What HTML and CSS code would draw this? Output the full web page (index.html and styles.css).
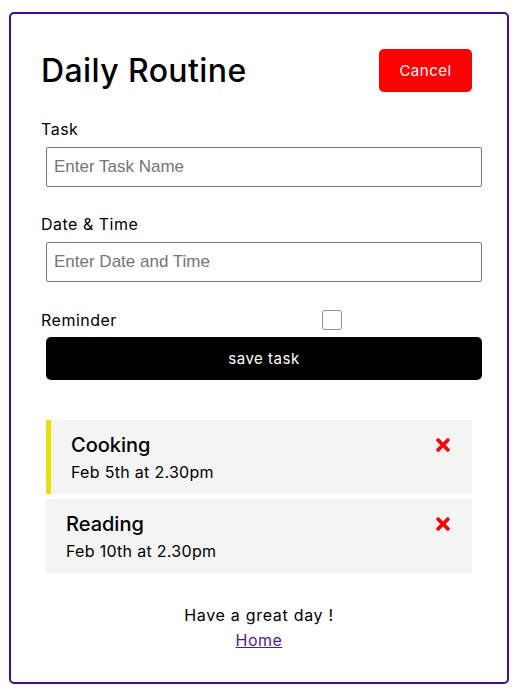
FILE: index.html
```html
<!DOCTYPE html>
<html lang="en">
<head>
<meta charset="utf-8">
<title>Daily Routine</title>
<link rel="stylesheet" href="styles.css">
</head>
<body>
<div class="container">
  <header class="header">
    <h1 class="title">Daily Routine</h1>
    <button class="btn btn-cancel" type="button">Cancel</button>
  </header>
  <form class="add-form">
    <div class="form-control">
      <label class="field-label">Task</label>
      <input class="text-input" type="text" placeholder="Enter Task Name">
    </div>
    <div class="form-control">
      <label class="field-label">Date &amp; Time</label>
      <input class="text-input" type="text" placeholder="Enter Date and Time">
    </div>
    <div class="form-control-check">
      <label class="check-label">Reminder</label>
      <div class="check-wrap"><input class="check-input" type="checkbox"></div>
    </div>
    <button class="btn btn-block" type="button">save task</button>
  </form>
  <div class="tasks">
    <div class="task reminder">
      <h3 class="task-title">Cooking
        <svg class="del-icon" viewBox="0 0 352 512" aria-hidden="true"><path d="M242.72 256l100.07-100.07c12.28-12.28 12.28-32.19 0-44.48l-22.24-22.24c-12.28-12.28-32.19-12.28-44.48 0L176 189.28 75.930 89.21c-12.28-12.28-32.19-12.28-44.48 0L9.21 111.45c-12.28 12.28-12.28 32.19 0 44.48L109.28 256 9.21 356.07c-12.28 12.28-12.28 32.19 0 44.48l22.24 22.24c12.28 12.28 32.2 12.28 44.48 0L176 322.72l100.07 100.07c12.28 12.28 32.2 12.28 44.48 0l22.24-22.240c12.28-12.28 12.28-32.19 0-44.48L242.72 256z"/></svg>
      </h3>
      <p class="task-day">Feb 5th at 2.30pm</p>
    </div>
    <div class="task">
      <h3 class="task-title">Reading
        <svg class="del-icon" viewBox="0 0 352 512" aria-hidden="true"><path d="M242.72 256l100.07-100.07c12.28-12.28 12.28-32.19 0-44.48l-22.24-22.24c-12.28-12.28-32.19-12.28-44.48 0L176 189.28 75.930 89.21c-12.28-12.28-32.19-12.28-44.48 0L9.21 111.45c-12.28 12.28-12.28 32.19 0 44.48L109.28 256 9.21 356.07c-12.28 12.28-12.28 32.19 0 44.48l22.24 22.24c12.28 12.28 32.2 12.28 44.48 0L176 322.72l100.07 100.07c12.28 12.28 32.2 12.28 44.48 0l22.24-22.240c12.28-12.28 12.28-32.19 0-44.48L242.72 256z"/></svg>
      </h3>
      <p class="task-day">Feb 10th at 2.30pm</p>
    </div>
  </div>
  <footer class="footer">
    <p class="footer-text">Have a great day !</p>
    <a class="footer-link" href="#">Home</a>
  </footer>
</div>
</body>
</html>
```
FILE: styles.css
```css
* {
  box-sizing: border-box;
  margin: 0;
  padding: 0;
}

body {
  font-family: "Inter", "Noto Sans", sans-serif;
  color: #000;
  background: #fff;
  letter-spacing: 0.5px;
}

.container {
  width: 500px;
  margin: 12px 0 0 9px;
  padding: 30px;
  border: 2px solid #3d0f99;
  border-radius: 5px;
}

.header {
  display: flex;
  justify-content: space-between;
  align-items: center;
  margin-bottom: 20px;
}

.title {
  font-size: 32px;
  font-weight: 500;
  line-height: 48px;
  letter-spacing: 0.4px;
}

.btn {
  display: inline-block;
  background: #000;
  color: #fff;
  border: none;
  border-radius: 5px;
  font-family: inherit;
  font-size: 15px;
  line-height: 23px;
  letter-spacing: 0.5px;
  padding: 10px 20px;
  cursor: pointer;
}

.btn-cancel {
  background: #ff0000;
  width: 93px;
  padding: 10px 0;
  margin: 5px 5px 5px 0;
  text-align: center;
}

.form-control {
  margin-bottom: 25px;
}

.field-label {
  display: block;
  font-size: 16px;
  line-height: 25px;
}

.text-input {
  display: block;
  width: 100%;
  height: 40px;
  margin: 5px 0 0 5px;
  padding: 3px 7px;
  font-family: "Liberation Sans", Arial, sans-serif;
  font-size: 17px;
  letter-spacing: normal;
  border: 1px solid #767676;
  border-radius: 2px;
  color: #000;
}

.text-input::placeholder {
  color: #757575;
}

.form-control-check {
  display: flex;
  align-items: center;
  height: 30px;
  margin-top: -2px;
}

.check-label {
  flex: 1;
  font-size: 16px;
  line-height: 24px;
}

.check-wrap {
  flex: 2;
  display: flex;
  justify-content: center;
}

.check-input {
  appearance: none;
  -webkit-appearance: none;
  width: 20px;
  height: 20px;
  border: 1px solid #8f8f8f;
  border-radius: 3px;
  background: #fff;
}

.btn-block {
  display: block;
  width: 100%;
  margin: 2px 0 0 5px;
  text-align: center;
}

.tasks {
  margin-top: 40px;
  display: flex;
  flex-direction: column;
  gap: 5px;
}

.task {
  background: #f4f4f4;
  margin: 0 5px;
  padding: 10px 20px;
}

.task.reminder {
  border-left: 5px solid #e6e205;
}

.task-title {
  display: flex;
  justify-content: space-between;
  align-items: center;
  font-size: 20px;
  font-weight: 500;
  line-height: 30px;
  letter-spacing: 0;
}

.del-icon {
  width: 14px;
  height: 20px;
  fill: #ff0000;
  margin-right: 2px;
}

.task-day {
  font-size: 16px;
  line-height: 24px;
  letter-spacing: 0.3px;
}

.footer {
  margin-top: 30px;
  text-align: center;
  font-size: 16px;
}

.footer-text {
  line-height: 25px;
  letter-spacing: 0.7px;
}

.footer-link {
  line-height: 24px;
  color: #551a8b;
}
```
